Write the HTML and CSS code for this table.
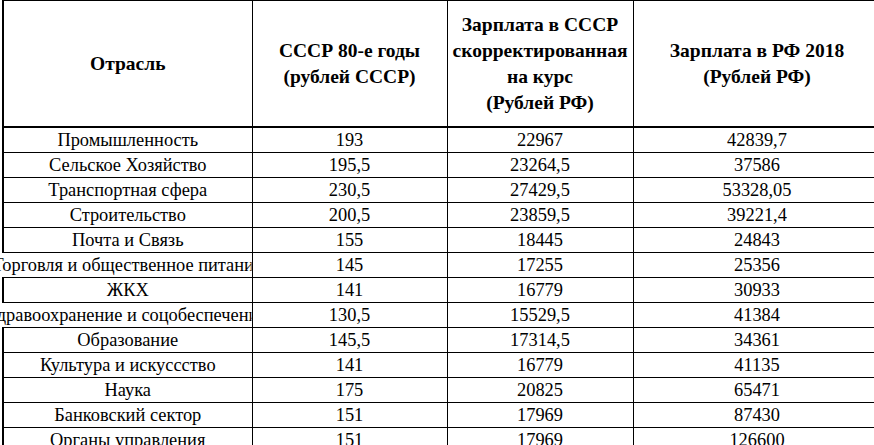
FILE: index.html
```html
<!DOCTYPE html>
<html lang="ru">
<head>
<meta charset="utf-8">
<title>Зарплаты</title>
<link rel="stylesheet" href="styles.css">
</head>
<body>
<div class="sheet">
<table class="grid">
<colgroup>
<col class="c1"><col class="c2"><col class="c3"><col class="c4">
</colgroup>
<thead>
<tr>
<th class="first">Отрасль</th>
<th>СССР 80-е годы<br>(рублей СССР)</th>
<th>Зарплата в СССР<br>скорректированная<br>на курс<br>(Рублей РФ)</th>
<th>Зарплата в РФ 2018<br>(Рублей РФ)</th>
</tr>
</thead>
<tbody>
<tr><td class="first">Промышленность</td><td>193</td><td>22967</td><td>42839,7</td></tr>
<tr><td class="first">Сельское Хозяйство</td><td>195,5</td><td>23264,5</td><td>37586</td></tr>
<tr><td class="first">Транспортная сфера</td><td>230,5</td><td>27429,5</td><td>53328,05</td></tr>
<tr><td class="first">Строительство</td><td>200,5</td><td>23859,5</td><td>39221,4</td></tr>
<tr><td class="first">Почта и Связь</td><td>155</td><td>18445</td><td>24843</td></tr>
<tr><td class="first over"><div class="spill">Торговля и общественное питание</div></td><td>145</td><td>17255</td><td>25356</td></tr>
<tr><td class="first">ЖКХ</td><td>141</td><td>16779</td><td>30933</td></tr>
<tr><td class="first over"><div class="spill">Здравоохранение и соцобеспечение</div></td><td>130,5</td><td>15529,5</td><td>41384</td></tr>
<tr><td class="first">Образование</td><td>145,5</td><td>17314,5</td><td>34361</td></tr>
<tr><td class="first">Культура и искуссство</td><td>141</td><td>16779</td><td>41135</td></tr>
<tr><td class="first">Наука</td><td>175</td><td>20825</td><td>65471</td></tr>
<tr><td class="first">Банковский сектор</td><td>151</td><td>17969</td><td>87430</td></tr>
<tr><td class="first">Органы управления</td><td>151</td><td>17969</td><td>126600</td></tr>
</tbody>
</table>
</div>
</body>
</html>
```

FILE: styles.css
```css
html, body {
  margin: 0;
  padding: 0;
  background: #fff;
  overflow: hidden;
  width: 874px;
  height: 445px;
}

body {
  font-family: "Liberation Serif", "Times New Roman", serif;
}

.sheet {
  padding-left: 2px;
  width: 900px;
}

.grid {
  border-collapse: collapse;
  table-layout: fixed;
  width: 878px;
  color: #000;
  font-family: inherit;
}

.c1 { width: 249px; }
.c2 { width: 195px; }
.c3 { width: 186px; }
.c4 { width: 248px; }

.grid th {
  height: 125px;
  padding: 0;
  font-size: 19.5px;
  font-weight: bold;
  line-height: 26px;
  text-align: center;
  vertical-align: middle;
  border: 1px solid #000;
  border-bottom: 2px solid #000;
}

.grid td {
  height: 24px;
  padding: 0;
  font-size: 18.4px;
  line-height: 24px;
  text-align: center;
  vertical-align: middle;
  white-space: nowrap;
  border: 1px solid #000;
}

.grid .first {
  border-left: 2px solid #000;
}

.grid td.over {
  border-left: none;
}

.spill {
  display: flex;
  justify-content: center;
  width: 100%;
  white-space: nowrap;
  clip-path: inset(-2px 0 -2px -60px);
}
```
